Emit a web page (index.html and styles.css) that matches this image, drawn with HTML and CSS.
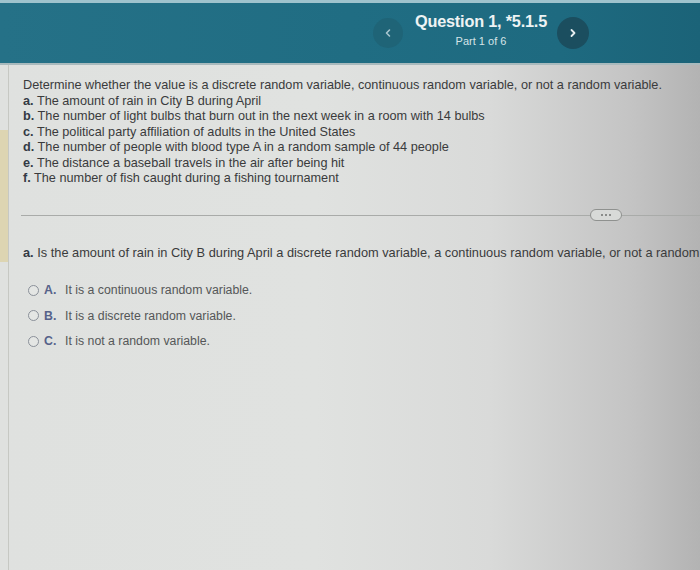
FILE: index.html
```html
<!DOCTYPE html>
<html>
<head>
<meta charset="utf-8">
<link rel="stylesheet" href="styles.css">
</head>
<body>
<div class="page">
  <header class="topbar">
    <div class="nav">
      <div class="navbtn prev"><svg width="10" height="10" viewBox="0 0 10 10"><path d="M6.5 2 L3.5 5 L6.5 8" fill="none" stroke="#a9c6cf" stroke-width="1.6" stroke-linecap="round" stroke-linejoin="round"/></svg></div>
      <div class="title">
        <div class="qname">Question 1, *5.1.5</div>
        <div class="part">Part 1 of 6</div>
      </div>
      <div class="navbtn next"><svg width="10" height="10" viewBox="0 0 10 10"><path d="M3.5 2 L6.5 5 L3.5 8" fill="none" stroke="#e6eef0" stroke-width="1.8" stroke-linecap="round" stroke-linejoin="round"/></svg></div>
    </div>
  </header>
  <main class="content">
    <div class="sidebar"><div class="tab"></div></div>
    <div class="body">
      <section class="intro">
        <p>Determine whether the value is a discrete random variable, continuous random variable, or not a random variable.</p>
        <p><b>a.</b> The amount of rain in City B during April</p>
        <p><b>b.</b> The number of light bulbs that burn out in the next week in a room with 14 bulbs</p>
        <p><b>c.</b> The political party affiliation of adults in the United States</p>
        <p><b>d.</b> The number of people with blood type A in a random sample of 44 people</p>
        <p><b>e.</b> The distance a baseball travels in the air after being hit</p>
        <p><b>f.</b> The number of fish caught during a fishing tournament</p>
      </section>
      <div class="divider"><span class="pill"><i></i><i></i><i></i></span></div>
      <section class="question">
        <p class="qtext"><b>a.</b> Is the amount of rain in City B during April a discrete random variable, a continuous random variable, or not a random variable?</p>
        <ul class="options">
          <li><span class="radio"></span><span class="letter">A.</span><span>It is a continuous random variable.</span></li>
          <li><span class="radio"></span><span class="letter">B.</span><span>It is a discrete random variable.</span></li>
          <li><span class="radio"></span><span class="letter">C.</span><span>It is not a random variable.</span></li>
        </ul>
      </section>
    </div>
  </main>
</div>
</body>
</html>
```
FILE: styles.css
```css
html, body {
  margin: 0;
  padding: 0;
  width: 700px;
  height: 570px;
  overflow: hidden;
}
body {
  font-family: "Liberation Sans", Arial, sans-serif;
  background: #dcdedc;
}
.page {
  width: 700px;
  height: 570px;
  overflow: hidden;
  display: flex;
  flex-direction: column;
  background: linear-gradient(90deg, #dfe1df 0%, #e0e2e0 45%, #d9dad9 70%, #c4c4c4 90%, #b3b3b3 100%);
}
.topbar {
  height: 60px;
  flex: none;
  border-top: 3px solid #9fc3cd;
  background: linear-gradient(90deg, #257187 0%, #206d83 50%, #1e6a80 80%, #1b6378 100%);
  border-bottom: 2px solid #a9babd;
  display: flex;
  justify-content: flex-end;
}
.nav {
  display: flex;
  align-items: center;
  margin-right: 111px;
  margin-top: -1px;
}
.navbtn {
  width: 30px;
  height: 30px;
  border-radius: 50%;
  display: flex;
  align-items: center;
  justify-content: center;
}
.prev {
  background: #1f6477;
}
.next {
  background: #1b4e5f;
  width: 32px;
  height: 32px;
}
.title {
  text-align: center;
  color: #eef3f4;
  width: 140px;
  margin: 0 6px 6px 8px;
}
.qname {
  font-weight: bold;
  font-size: 16.3px;
  letter-spacing: -0.2px;
  line-height: 18px;
}
.part {
  font-size: 11px;
  line-height: 14px;
  margin-top: 4px;
  color: #d5e4e8;
}
.content {
  flex: 1;
  display: flex;
  min-height: 0;
}
.sidebar {
  width: 8px;
  flex: none;
  border-right: 1px solid #c6c8c3;
  padding-top: 65px;
}
.tab {
  height: 132px;
  background: #ddd5b2;
}
.body {
  flex: 1;
  padding-left: 14px;
  min-width: 0;
  overflow: hidden;
}
.intro {
  padding-top: 13px;
  color: #3a3b3c;
  font-size: 12.7px;
}
.intro p {
  margin: 0;
  line-height: 15.5px;
  white-space: nowrap;
}
.intro b {
  color: #333a45;
}
.divider {
  margin-top: 22px;
  margin-left: -2px;
  height: 12px;
  position: relative;
}
.divider::before {
  content: "";
  position: absolute;
  left: 0;
  right: 0;
  top: 6px;
  border-top: 1px solid #a9aba9;
}
.pill {
  position: absolute;
  left: 569px;
  top: 0;
  width: 30px;
  height: 10px;
  border: 1px solid #8f918f;
  border-radius: 6px;
  background: #d8dad8;
  display: flex;
  align-items: center;
  justify-content: center;
  gap: 2px;
}
.pill i {
  width: 2px;
  height: 2px;
  border-radius: 50%;
  background: #707270;
}
.question {
  padding-top: 24px;
}
.qtext {
  margin: 0;
  font-size: 12.8px;
  color: #3a3b3c;
  white-space: nowrap;
  line-height: 16px;
}
.qtext b {
  color: #333a45;
}
.options {
  list-style: none;
  margin: 17px 0 0 0;
  padding: 0 0 0 5px;
  font-size: 12.3px;
  color: #555758;
}
.options li {
  display: flex;
  align-items: center;
  height: 25.5px;
}
.radio {
  width: 9px;
  height: 9px;
  border: 1.5px solid #8a9099;
  border-radius: 50%;
  margin-right: 5px;
  background: #e4e6e4;
}
.letter {
  font-weight: bold;
  color: #56628a;
  width: 21px;
}
```
